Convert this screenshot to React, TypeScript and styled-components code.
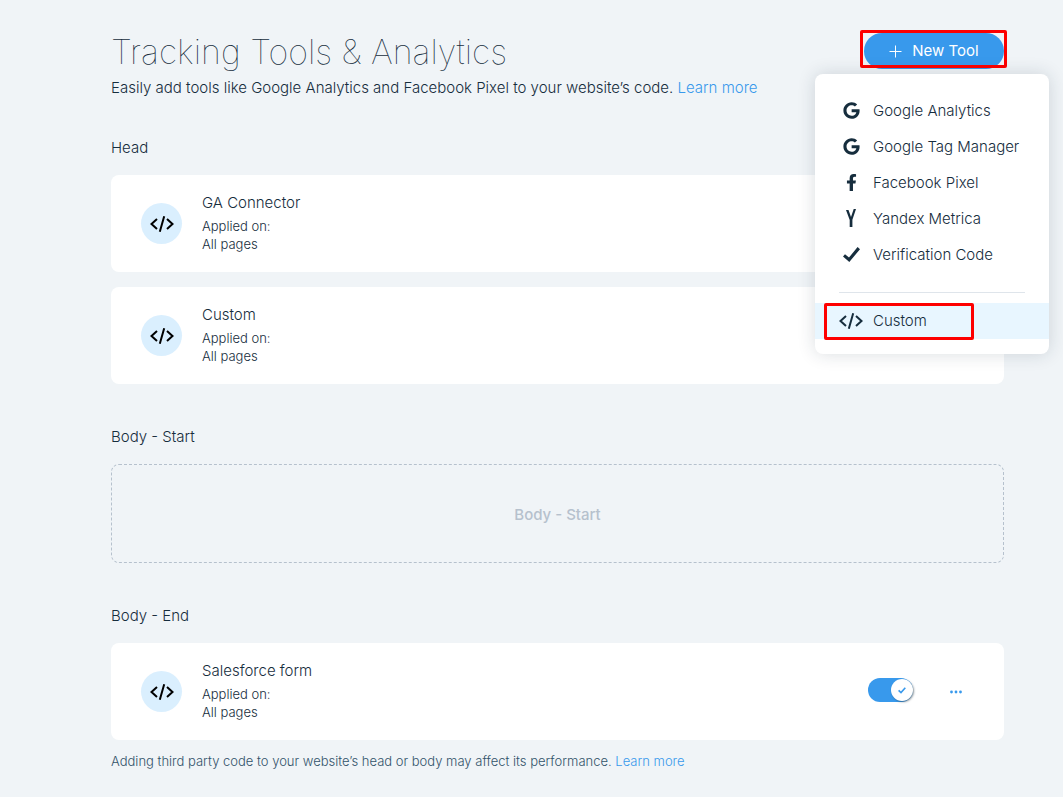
import React from "react";
import styled, { createGlobalStyle } from "styled-components";
import { FaFacebookF, FaGoogle } from "react-icons/fa";

const ink = "#162d3d";
const blue = "#3899ec";

const GlobalStyle = createGlobalStyle`
  * { box-sizing: border-box; }
  body {
    margin: 0;
    background: #f0f4f7;
    color: ${ink};
    font-family: Inter, "Helvetica Neue", "Liberation Sans", sans-serif;
    font-size: 15px;
    font-weight: 300;
    line-height: 24px;
  }
  button { font: inherit; color: inherit; cursor: pointer; }
`;

const Page = styled.main`
  padding: 28px 59px 24px 111px;
`;

const Header = styled.header`
  display: flex;
  justify-content: space-between;
  align-items: flex-start;
`;

const Title = styled.h1`
  margin: 0;
  font-size: 34px;
  font-weight: 100;
  line-height: 48px;
`;

const Subtitle = styled.p`
  margin: 0;
`;

const Link = styled.a`
  color: ${blue};
  text-decoration: none;
`;

const ToolPicker = styled.div`
  position: relative;
  flex: none;
  margin-top: 5px;
`;

const NewToolButton = styled.button`
  display: flex;
  align-items: center;
  justify-content: center;
  gap: 10px;
  width: 140px;
  height: 36px;
  padding: 0;
  border: 0;
  border-radius: 18px;
  background: ${blue};
  color: #fff;
  font-weight: 400;
`;

const Highlight = styled.span<{ $inset: string }>`
  position: absolute;
  inset: ${(p) => p.$inset};
  border: 3px solid #fe0000;
  border-radius: 2px;
  pointer-events: none;
`;

const Menu = styled.div`
  position: absolute;
  z-index: 2;
  top: 41px;
  right: -45px;
  width: 234px;
  padding: 19px 0 15px;
  border-radius: 8px;
  background: #fff;
  box-shadow: 0 0 18px rgba(22, 45, 61, 0.16);
`;

const MenuItem = styled.button<{ $active?: boolean }>`
  position: relative;
  display: grid;
  grid-template-columns: 24px 1fr;
  align-items: center;
  gap: 10px;
  width: 100%;
  height: 36px;
  padding: 0 24px;
  border: 0;
  background: ${(p) => (p.$active ? "#e8f6ff" : "transparent")};
  text-align: left;
  white-space: nowrap;
`;

const MenuIcon = styled.span<{ $raised?: boolean }>`
  display: flex;
  justify-content: center;
  padding-bottom: ${(p) => (p.$raised ? 2 : 0)}px;
`;

const Divider = styled.hr`
  height: 1px;
  margin: 19px 24px 10px;
  border: 0;
  background: #dfe5eb;
`;

const Section = styled.section<{ $gap: number }>`
  margin-top: ${(p) => p.$gap}px;
`;

const SectionTitle = styled.h2`
  margin: 0 0 15px;
  font: inherit;
`;

const CardList = styled.div`
  display: grid;
  gap: 15px;
`;

const Card = styled.article`
  display: flex;
  align-items: center;
  gap: 20px;
  padding: 16px 30px 19px;
  border-radius: 8px;
  background: #fff;
`;

const Badge = styled.span`
  display: flex;
  align-items: center;
  justify-content: center;
  width: 41px;
  height: 41px;
  margin-top: 3px;
  padding-top: 1px;
  border-radius: 50%;
  background: #daeffe;
  color: #000;
`;

const CardText = styled.div`
  flex: 1;
`;

const CardName = styled.h3`
  margin: 0 0 2px;
  font: inherit;
`;

const CardDetail = styled.p`
  margin: 0;
  font-size: 13px;
  line-height: 18px;
`;

const Toggle = styled.label`
  position: relative;
  display: flex;
  justify-content: flex-end;
  width: 45px;
  height: 24px;
  padding: 1px 0;
  border-radius: 12px;
  background: ${blue};
`;

const ToggleInput = styled.input`
  position: absolute;
  inset: 0;
  margin: 0;
  opacity: 0;
`;

const Knob = styled.span`
  display: flex;
  align-items: center;
  justify-content: center;
  width: 22px;
  height: 22px;
  border-radius: 50%;
  background: #fff;
  box-shadow: 1px 1px 2px rgba(22, 45, 61, 0.5);
`;

const MoreButton = styled.button`
  display: flex;
  align-items: center;
  justify-content: center;
  width: 36px;
  height: 36px;
  margin-top: 3px;
  padding: 0;
  border: 0;
  background: none;
`;

const Controls = styled.div`
  display: flex;
  align-items: center;
  gap: 25px;
`;

const EmptySlot = styled.div`
  display: flex;
  align-items: center;
  justify-content: center;
  height: 99px;
  padding-top: 2px;
  border: 1px dashed #b6c1cd;
  border-radius: 8px;
  color: #b6c1cd;
  font-weight: 500;
`;

const Footnote = styled.p`
  margin: 11px 0 0;
  color: #32536a;
  font-size: 13px;
  line-height: 20px;
`;

const CodeIcon = () => (
  <svg width="24" height="16" viewBox="0 0 24 16" fill="none" stroke="currentColor" strokeWidth="2" aria-hidden="true">
    <path d="M7 3 1.500 8 7 13M17 3l5.500 5L17 13M14.200.3 9.800 15.700" />
  </svg>
);

const YandexIcon = () => (
  <svg width="10" height="18" viewBox="0 0 10 18" fill="currentColor" aria-hidden="true">
    <path d="M0 1h2.500L5 8 7.700 0H10L6.400 10.800V18H3.700V11z" />
  </svg>
);

const VerifyIcon = () => (
  <svg width="17" height="15" viewBox="0 0 17 15" fill="currentColor" aria-hidden="true">
    <path d="M2 7.200 0 9.400 6.300 15 17 2.200 14.600 0 6 10.500z" />
  </svg>
);

const PlusIcon = () => (
  <svg width="13" height="13" viewBox="0 0 13 13" stroke="currentColor" aria-hidden="true">
    <path d="M6.500 .5v12M.5 6.500h12" />
  </svg>
);

const ToggleCheck = () => (
  <svg width="8" height="7" viewBox="0 0 8 7" fill="none" stroke={blue} strokeWidth="1.600" aria-hidden="true">
    <path d="M.6 3.300 3 5.600 7.300.7" />
  </svg>
);

const DotsIcon = () => (
  <svg width="12" height="4" viewBox="0 0 12 4" fill={blue} aria-hidden="true">
    <circle cx="1.500" cy="2" r="1.400" />
    <circle cx="6" cy="2" r="1.400" />
    <circle cx="10.500" cy="2" r="1.400" />
  </svg>
);

const services = [
  { label: "Google Analytics", icon: <FaGoogle size={17} /> },
  { label: "Google Tag Manager", icon: <FaGoogle size={17} /> },
  { label: "Facebook Pixel", icon: <FaFacebookF size={17} /> },
  { label: "Yandex Metrica", icon: <YandexIcon /> },
  { label: "Verification Code", icon: <VerifyIcon /> },
];

const ToolCard = ({ name }: { name: string }) => (
  <Card>
    <Badge>
      <CodeIcon />
    </Badge>
    <CardText>
      <CardName>{name}</CardName>
      <CardDetail>Applied on:</CardDetail>
      <CardDetail>All pages</CardDetail>
    </CardText>
    <Controls>
      <Toggle>
        <ToggleInput type="checkbox" defaultChecked aria-label={`Enable ${name}`} />
        <Knob>
          <ToggleCheck />
        </Knob>
      </Toggle>
      <MoreButton type="button" aria-label={`More actions for ${name}`}>
        <DotsIcon />
      </MoreButton>
    </Controls>
  </Card>
);

export default function App() {
  return (
    <>
      <GlobalStyle />
      <Page>
        <Header>
          <div>
            <Title>Tracking Tools &amp; Analytics</Title>
            <Subtitle>
              Easily add tools like Google Analytics and Facebook Pixel to your website’s code.{" "}
              <Link href="#tools">Learn more</Link>
            </Subtitle>
          </div>
          <ToolPicker>
            <NewToolButton type="button">
              <PlusIcon />
              New Tool
            </NewToolButton>
            <Highlight $inset="-3px -3px 1px -4px" />
            <Menu>
              {services.map((s) => (
                <MenuItem type="button" key={s.label}>
                  <MenuIcon $raised>{s.icon}</MenuIcon>
                  {s.label}
                </MenuItem>
              ))}
              <Divider />
              <MenuItem type="button" $active>
                <MenuIcon>
                  <CodeIcon />
                </MenuIcon>
                Custom
                <Highlight $inset="0 75px -1px 9px" />
              </MenuItem>
            </Menu>
          </ToolPicker>
        </Header>

        <Section $gap={36}>
          <SectionTitle>Head</SectionTitle>
          <CardList>
            <ToolCard name="GA Connector" />
            <ToolCard name="Custom" />
          </CardList>
        </Section>

        <Section $gap={41}>
          <SectionTitle>Body - Start</SectionTitle>
          <EmptySlot>Body - Start</EmptySlot>
        </Section>

        <Section $gap={41}>
          <SectionTitle>Body - End</SectionTitle>
          <CardList>
            <ToolCard name="Salesforce form" />
          </CardList>
          <Footnote>
            Adding third party code to your website’s head or body may affect its performance.{" "}
            <Link href="#performance">Learn more</Link>
          </Footnote>
        </Section>
      </Page>
    </>
  );
}
